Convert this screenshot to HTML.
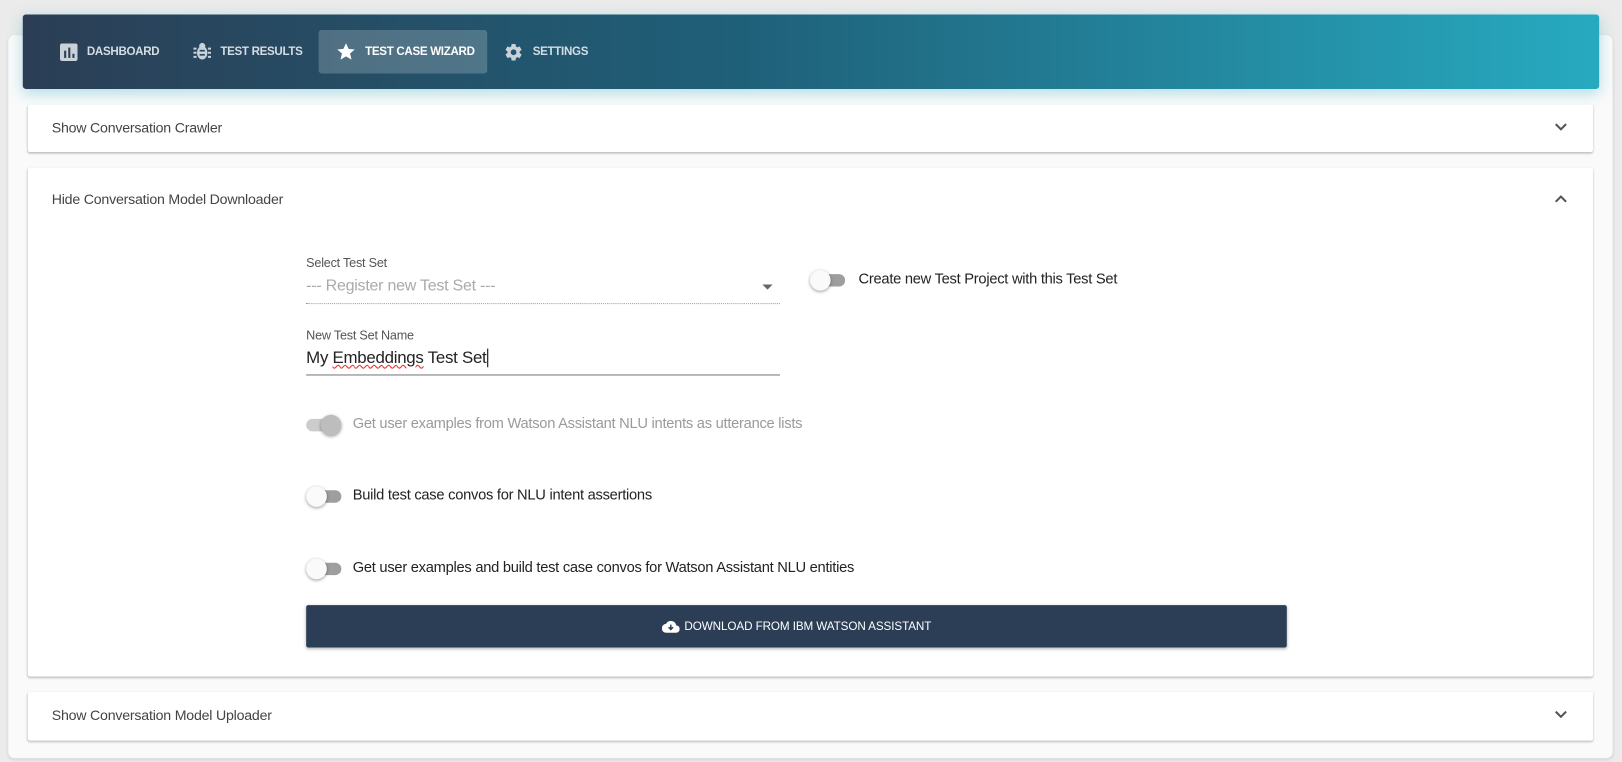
<!DOCTYPE html>
<html><head><meta charset="utf-8"><style>
*{box-sizing:border-box;margin:0;padding:0}
body{width:1622px;height:762px;background:#ebebeb;font-family:"Liberation Sans",sans-serif;overflow:hidden;color:#333}
#w{position:relative;width:1568px;height:737px;transform:scale(1.0344);transform-origin:0 0}
.card{position:absolute;left:8px;top:34px;width:1551px;height:699px;background:#fafafa;border-radius:6px;box-shadow:0 1px 3px rgba(0,0,0,.12)}
.hdr{position:absolute;left:22px;top:14px;width:1524px;height:72px;border-radius:3px;background:linear-gradient(90deg,#2b3e55 0%,#1f5f78 45%,#27aac0 100%);box-shadow:0 4px 14px rgba(39,170,192,.35)}
.nav{position:absolute;top:15px;height:42px;display:flex;align-items:center;color:#d4dde4;font-size:11.2px;font-weight:bold;letter-spacing:-.3px}
.nav svg{margin-right:9px}
.act{background:rgba(255,255,255,.2);border-radius:3px;color:#fff}
.panel{position:absolute;left:27px;width:1513px;background:#fff;box-shadow:0 1px 2px rgba(0,0,0,.25);border-radius:2px}
.ptitle{position:absolute;left:23px;font-size:13.7px;color:#444;letter-spacing:-.2px}
.chev{position:absolute;right:24px}
.lbl{position:absolute;font-size:12.2px;color:#555;letter-spacing:-.2px}
.tg{position:absolute;width:32px;height:12px;border-radius:6px;background:#9e9e9e}
.tg::after{content:"";position:absolute;left:-2px;top:-4px;width:20px;height:20px;border-radius:50%;background:#fafafa;box-shadow:0 1px 3px rgba(0,0,0,.4)}
.tg.on{background:#ccc}.tg.on::after{left:14px;background:#bdbdbd}
.tt{position:absolute;font-size:14.2px;color:#222;letter-spacing:-.25px}
</style></head><body><div id="w">
<div class="card"></div>
<div class="hdr">
 <div class="nav" style="left:36px"><svg width="17" height="17" viewBox="0 0 17 17"><rect width="17" height="17" rx="2" fill="#c9d2d9"/><rect x="4" y="7" width="2" height="7" fill="#2b3e55"/><rect x="8" y="4" width="2" height="10" fill="#2b3e55"/><rect x="12" y="10" width="2" height="4" fill="#2b3e55"/></svg>DASHBOARD</div>
 <div class="nav" style="left:165px"><svg width="17" height="18" viewBox="0 0 17 18"><ellipse cx="8.5" cy="10" rx="5" ry="6.5" fill="#c9d2d9"/><circle cx="8.5" cy="3.5" r="3" fill="#c9d2d9"/><path d="M0 6h3M0 10h3M0 14h3M14 6h3M14 10h3M14 14h3" stroke="#c9d2d9" stroke-width="2"/><path d="M6 8h5M6 12h5" stroke="#214a63" stroke-width="1.5"/></svg>TEST RESULTS</div>
 <div class="nav act" style="left:286px;width:163px;padding-left:17px"><svg width="19" height="18" viewBox="0 0 24 23"><path d="M12 1l3.2 7 7.6.7-5.8 5 1.8 7.5L12 17.3 5.2 21.2 7 13.7 1.2 8.7l7.6-.7z" fill="#fff"/></svg>TEST CASE WIZARD</div>
 <div class="nav" style="left:465px"><svg width="19" height="19" viewBox="0 0 24 24"><path fill="#c9d2d9" d="M19.4 13c.04-.33.06-.66.06-1s-.02-.67-.06-1l2.1-1.65c.2-.15.25-.42.12-.64l-2-3.46c-.12-.22-.39-.3-.61-.22l-2.49 1c-.52-.4-1.08-.73-1.69-.98l-.38-2.65A.49.49 0 0 0 14 2h-4c-.25 0-.46.18-.49.42l-.38 2.65c-.61.25-1.17.59-1.690.98l-2.49-1c-.23-.09-.49 0-.61.22l-2 3.46c-.13.22-.07.49.12.64L4.57 11c-.04.33-.07.67-.07 1s.03.67.07 1l-2.11 1.65c-.19.15-.24.42-.12.64l2 3.46c.12.22.39.3.61.22l2.49-1c.52.4 1.08.73 1.69.98l.38 2.65c.03.24.24.42.49.42h4c.25 0 .46-.18.49-.42l.38-2.65c.61-.25 1.17-.59 1.69-.98l2.49 1c.23.09.49 0 .61-.22l2-3.46c.12-.22.07-.49-.12-.64zM12 15.5A3.5 3.5 0 1 1 12 8.5a3.5 3.5 0 0 1 0 7z"/></svg>SETTINGS</div>
</div>

<div class="panel" style="top:101px;height:46px"><div class="ptitle" style="top:15px">Show Conversation Crawler</div><svg class="chev" style="top:17px" width="14" height="10" viewBox="0 0 14 10"><path d="M2 2l5 5 5-5" stroke="#555" stroke-width="2" fill="none"/></svg></div>

<div class="panel" style="top:162px;height:492px">
 <div class="ptitle" style="top:23px">Hide Conversation Model Downloader</div><svg class="chev" style="top:25px" width="14" height="10" viewBox="0 0 14 10"><path d="M2 8l5-5 5 5" stroke="#555" stroke-width="2" fill="none"/></svg>
</div>
<div class="lbl" style="left:296px;top:247px">Select Test Set</div>
<div class="tt" style="left:296px;top:268px;color:#aaa;font-size:15.5px">--- Register new Test Set ---</div>
<svg style="position:absolute;left:737px;top:275px" width="10" height="6"><path d="M0 0h10L5 5z" fill="#666"/></svg>
<div style="position:absolute;left:296px;top:293px;width:458px;border-top:1px dotted #999"></div>
<div class="tg" style="left:785px;top:265px"></div>
<div class="tt" style="left:830px;top:262px">Create new Test Project with this Test Set</div>
<div class="lbl" style="left:296px;top:317px">New Test Set Name</div>
<div class="tt" style="left:296px;top:337px;font-size:16.3px">My <span style="text-decoration:underline wavy #e33;text-decoration-thickness:1px">Embeddings</span> Test Set<span style="border-left:1px solid #000;margin-left:1px"></span></div>
<div style="position:absolute;left:296px;top:362px;width:458px;border-top:1px solid #777"></div>
<div class="tg on" style="left:296px;top:405px"></div>
<div class="tt" style="left:341px;top:402px;color:#9a9a9a">Get user examples from Watson Assistant NLU intents as utterance lists</div>
<div class="tg" style="left:298px;top:474px"></div>
<div class="tt" style="left:341px;top:471px">Build test case convos for NLU intent assertions</div>
<div class="tg" style="left:298px;top:544px"></div>
<div class="tt" style="left:341px;top:541px">Get user examples and build test case convos for Watson Assistant NLU entities</div>
<div style="position:absolute;left:296px;top:585px;width:948px;height:41px;background:#2b3e55;border-radius:2px;box-shadow:0 1px 3px rgba(0,0,0,.3);color:#fff;font-size:11.3px;display:flex;align-items:center;justify-content:center;letter-spacing:-.1px"><svg width="17" height="12" viewBox="0 0 24 16" style="margin-right:5px"><path fill="#fff" d="M19.4 6A7.5 7.5 0 0 0 5.4 4 6 6 0 0 0 6 16h13a5 5 0 0 0 .4-10z"/><path d="M12 5v6M9 8.5l3 3 3-3" stroke="#2b3e55" stroke-width="2" fill="none"/></svg>DOWNLOAD FROM IBM WATSON ASSISTANT</div>

<div class="panel" style="top:669px;height:47px"><div class="ptitle" style="top:15px">Show Conversation Model Uploader</div><svg class="chev" style="top:17px" width="14" height="10" viewBox="0 0 14 10"><path d="M2 2l5 5 5-5" stroke="#555" stroke-width="2" fill="none"/></svg></div>
</div></body></html>
